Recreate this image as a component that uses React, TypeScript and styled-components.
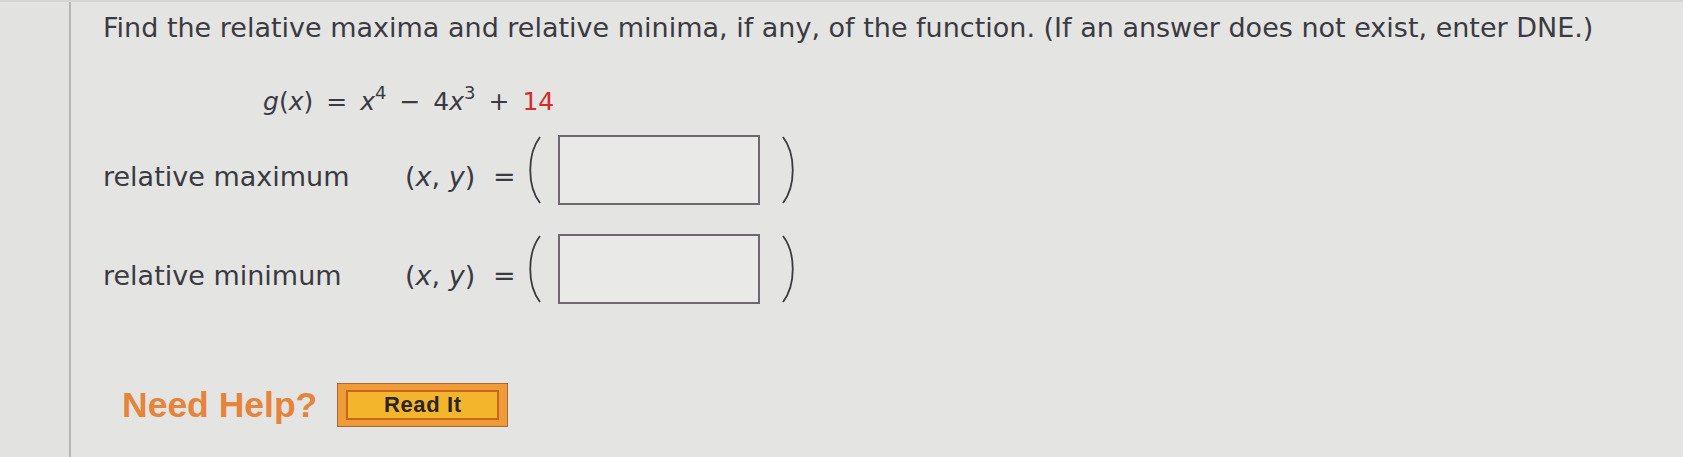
import React from "react";
import styled, { createGlobalStyle } from "styled-components";

const Global = createGlobalStyle`
  html, body { margin: 0; padding: 0; }
  body {
    background: #e4e4e2;
    font-family: "DejaVu Sans", Verdana, sans-serif;
    color: #3b3a42;
  }
`;

const Page = styled.div`
  display: flex;
  width: 1683px;
  height: 457px;
  border-top: 2px solid #d6d6d4;
  box-sizing: border-box;
  overflow: hidden;
`;

const Strip = styled.div`
  width: 69px;
  flex: none;
  background: #e2e2e0;
  border-right: 2px solid #b6b6b6;
`;

const Main = styled.div`
  flex: 1;
  display: flex;
  flex-direction: column;
  padding: 10px 0 0 32px;
`;

const Title = styled.div`
  font-size: 27px;
  line-height: 32px;
  white-space: nowrap;
`;

const Equation = styled.div`
  margin: 43px 0 0 160px;
  font-size: 25px;
  line-height: 30px;
  white-space: nowrap;
`;

const Var = styled.i`
  font-style: italic;
`;

const Sup = styled.sup`
  font-size: 18px;
  vertical-align: 11px;
  line-height: 0;
`;

const Red = styled.span`
  color: #d42b2e;
`;

const Op = styled.span`
  margin: 0 13px;
`;

const Rows = styled.div`
  display: flex;
  flex-direction: column;
  gap: 29px;
  margin-top: 18px;
`;

const Row = styled.div`
  display: flex;
  align-items: center;
  height: 70px;
  font-size: 27px;
`;

const Label = styled.div`
  width: 302px;
  flex: none;
  white-space: nowrap;
  padding-top: 12px;
`;

const Pair = styled.div`
  width: 88px;
  flex: none;
  white-space: nowrap;
  padding-top: 12px;
`;

const Eq = styled.div`
  width: 32px;
  flex: none;
  padding-top: 12px;
`;

const Box = styled.div`
  width: 198px;
  height: 66px;
  border: 2px solid #6e6772;
  background: #e9e9e7;
  margin: 0 21px 0 16px;
`;

const Paren = ({ flip }: { flip?: boolean }) => (
  <svg width="17" height="68" viewBox="0 0 17 68" style={{ transform: flip ? "scaleX(-1)" : undefined }}>
    <path d="M15 1 C2 18 2 50 15 67" fill="none" stroke="#3b3a42" strokeWidth="1.8" />
  </svg>
);

const HelpRow = styled.div`
  display: flex;
  align-items: center;
  margin: 79px 0 0 19px;
  gap: 20px;
`;

const HelpText = styled.div`
  font-family: "Liberation Sans", Arial, sans-serif;
  font-weight: bold;
  font-size: 35.5px;
  color: #e5843a;
`;

const ReadBtn = styled.div`
  width: 171px;
  height: 44px;
  box-sizing: border-box;
  border: 1px solid #a8683c;
  background: #ef9c38;
  padding: 6px 8px;
  display: flex;
`;

const ReadInner = styled.div`
  flex: 1;
  border: 2px solid #c8661c;
  background: #f2b52c;
  display: flex;
  align-items: center;
  justify-content: center;
  font-family: "Liberation Sans", Arial, sans-serif;
  font-weight: bold;
  font-size: 22px;
  letter-spacing: 0.6px;
  color: #2a2522;
`;

export default function App() {
  return (
    <>
      <Global />
      <Page>
        <Strip />
        <Main>
          <Title>
            Find the relative maxima and relative minima, if any, of the function. (If an answer does not exist, enter DNE.)
          </Title>
          <Equation>
            <Var>g</Var>(<Var>x</Var>)<Op>=</Op><Var>x</Var>
            <Sup>4</Sup>
            <Op>−</Op>4<Var>x</Var>
            <Sup>3</Sup>
            <Op>+</Op>
            <Red>14</Red>
          </Equation>
          <Rows>
            <Row>
              <Label>relative maximum</Label>
              <Pair>
                (<Var>x</Var>, <Var>y</Var>)
              </Pair>
              <Eq>=</Eq>
              <Paren />
              <Box />
              <Paren flip />
            </Row>
            <Row>
              <Label>relative minimum</Label>
              <Pair>
                (<Var>x</Var>, <Var>y</Var>)
              </Pair>
              <Eq>=</Eq>
              <Paren />
              <Box />
              <Paren flip />
            </Row>
          </Rows>
          <HelpRow>
            <HelpText>Need Help?</HelpText>
            <ReadBtn>
              <ReadInner>Read It</ReadInner>
            </ReadBtn>
          </HelpRow>
        </Main>
      </Page>
    </>
  );
}
